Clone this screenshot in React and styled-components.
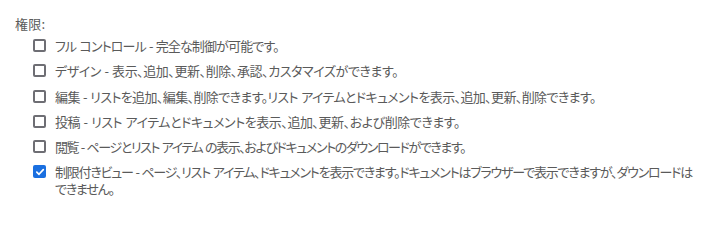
import React from "react";
import styled, { createGlobalStyle } from "styled-components";

const Global = createGlobalStyle`
  html, body { margin: 0; padding: 0; background: #fff; }
  body {
    font-family: "Noto Sans CJK JP", "Noto Sans", sans-serif;
    color: #5a5a5a;
  }
`;

const Panel = styled.div`
  padding: 15px 0 0 15px;
  font-size: 13px;
  font-feature-settings: "palt";
`;

const Title = styled.div`
  line-height: 17px;
  margin-bottom: 5px;
  letter-spacing: 0.3px;
`;

const List = styled.div`
  display: flex;
  flex-direction: column;
  gap: 8.3px;
  padding-left: 18px;
`;

const Row = styled.label`
  display: flex;
  align-items: flex-start;
  gap: 9px;
  line-height: 17px;
`;

const Box = styled.span`
  flex: none;
  width: 13px;
  height: 13px;
  margin-top: 2px;
  box-sizing: border-box;
  border-radius: 2px;
  border: ${(p) => (p.$checked ? "none" : "2px solid #6e6e74")};
  background: ${(p) => (p.$checked ? "#1a6fe0" : "#fff")};
  display: flex;
  align-items: center;
  justify-content: center;
`;

const Text = styled.span`
  flex: 1;
  white-space: nowrap;
  letter-spacing: ${(p) => p.$tight}px;
  word-spacing: 1px;
`;

const items = [
  { name: "フル コントロール", lines: ["完全な制御が可能です。"], tight: -0.85 },
  { name: "デザイン", lines: ["表示、追加、更新、削除、承認、カスタマイズができます。"], tight: -0.42 },
  { name: "編集", lines: ["リストを追加、編集、削除できます。リスト アイテムとドキュメントを表示、追加、更新、削除できます。"], tight: -0.62 },
  { name: "投稿", lines: ["リスト アイテムとドキュメントを表示、追加、更新、および削除できます。"], tight: -0.45 },
  { name: "閲覧", lines: ["ページとリスト アイテム の表示、およびドキュメントのダウンロードができます。"], tight: -1.38 },
  {
    name: "制限付きビュー ",
    lines: ["ページ、リスト アイテム、ドキュメントを表示できます。ドキュメントはブラウザーで表示できますが、ダウンロードは", "できません。"],
    tight: -1.2,
    checked: true,
  },
];

export default function App() {
  return (
    <>
      <Global />
      <Panel>
        <Title>権限:</Title>
        <List>
          {items.map(({ name, lines, tight, checked }) => (
            <Row key={name}>
              <Box $checked={checked}>
                {checked && (
                  <svg width="10" height="10" viewBox="0 0 10 10">
                    <path d="M1.8 5.2 L4 7.3 L8.3 2.6" fill="none" stroke="#fff" strokeWidth="1.7" strokeLinecap="round" strokeLinejoin="round" />
                  </svg>
                )}
              </Box>
              <Text $tight={tight}>
                {name} - {lines[0]}
                {lines.slice(1).map((l) => (
                  <React.Fragment key={l}>
                    <br />
                    {l}
                  </React.Fragment>
                ))}
              </Text>
            </Row>
          ))}
        </List>
      </Panel>
    </>
  );
}
